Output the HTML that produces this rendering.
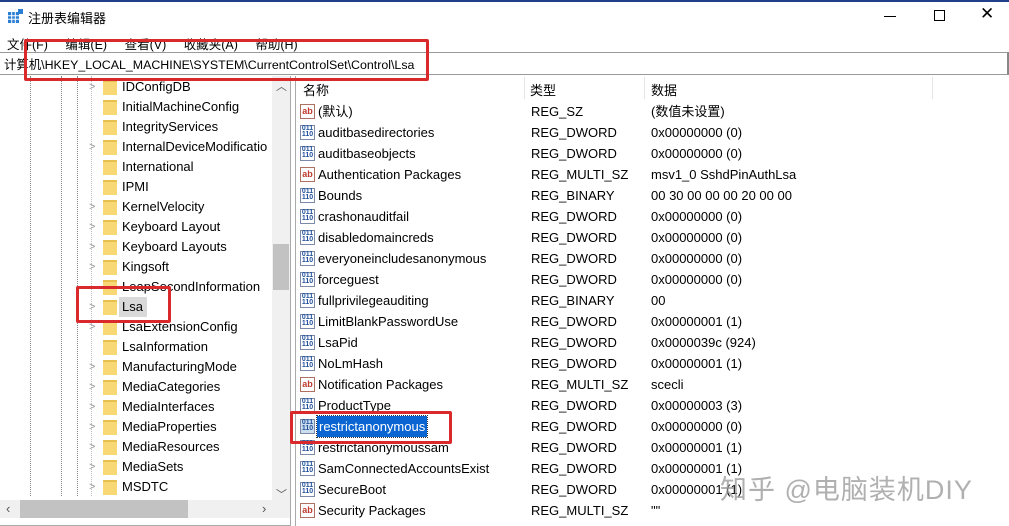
<!DOCTYPE html><html><head><meta charset="utf-8"><style>
*{margin:0;padding:0;box-sizing:border-box}
body{width:1009px;height:526px;overflow:hidden;background:#fff;font-family:"Liberation Sans","Noto Sans CJK SC",sans-serif;font-size:13px;color:#000;position:relative}
.a{position:absolute;white-space:nowrap}
.tr{position:absolute;left:0;height:20px;line-height:20px}
.fold{position:absolute;left:103px;top:3px;width:14px;height:15px;background:#f8d775;border-top:2px solid #e8c050}
.arr{position:absolute;left:89px;top:0;color:#999;font-size:11px}
.row{position:absolute;left:296px;height:21px;line-height:21px;width:713px}
.ic{position:absolute;left:4px;top:3px;width:15px;height:15px;border:1px solid #7a8aa8;font-size:7px;line-height:6px;text-align:center;color:#1f4f9c;font-weight:bold;background:#fff}
.ab{border-color:#b07060;color:#c0392b;font-size:9px;line-height:13px}
.red{position:absolute;border:3px solid #d9292b;border-radius:2px}
</style></head><body>
<div class="a" style="left:0;top:0;width:1009px;height:2px;background:#1f3f8a"></div>
<svg class="a" style="left:8px;top:9px" width="15" height="15"><rect x="0" y="3" width="11" height="11" fill="#2a7fd4"/><path d="M0 6.7h11M0 10.3h11M3.7 3v11M7.3 3v11" stroke="#fff" stroke-width="1"/><rect x="10" y="0" width="5" height="5" fill="#2a7fd4"/></svg>
<div class="a" style="left:28px;top:8px;font-size:13px">注册表编辑器</div>
<div class="a" style="left:884px;top:16px;width:12px;height:1px;background:#000"></div>
<div class="a" style="left:934px;top:10px;width:11px;height:11px;border:1px solid #000"></div>
<div class="a" style="left:980px;top:4px;font-size:17px;font-weight:100">✕</div>
<div class="a" style="left:7px;top:34px;font-size:12.5px;word-spacing:14px">文件(F) 编辑(E) 查看(V) 收藏夹(A) 帮助(H)</div>
<div class="a" style="left:0;top:52px;width:1009px;height:23px;border:1px solid #999;border-left:none;border-right:2px solid #888"></div>
<div class="a" style="left:4px;top:55px;font-size:12.4px">计算机\HKEY_LOCAL_MACHINE\SYSTEM\CurrentControlSet\Control\Lsa</div>
<!-- tree -->
<div class="a" style="left:0;top:76px;width:291px;height:450px;border-right:1px solid #aaa;border-bottom:1px solid #aaa;overflow:hidden">
<div class="a" style="left:30px;top:0;height:420px;border-left:1px dotted #888"></div>
<div class="a" style="left:61px;top:0;height:420px;border-left:1px dotted #888"></div>
<div class="a" style="left:77px;top:0;height:420px;border-left:1px dotted #888"></div>
<div class="a" style="left:91px;top:0;height:420px;border-left:1px dotted #bbb"></div>
<div class="a" style="left:272px;top:0;width:18px;height:424px;background:#f0f0f0"></div>
<div class="a" style="left:276px;top:2px;color:#555;font-size:11px">︿</div>
<div class="a" style="left:273px;top:168px;width:16px;height:46px;background:#c2c2c2"></div>
<div class="a" style="left:276px;top:410px;color:#555;font-size:11px">﹀</div>
<div class="a" style="left:0;top:424px;width:290px;height:18px;background:#f0f0f0"></div>
<div class="a" style="left:20px;top:424px;width:168px;height:18px;background:#c2c2c2"></div>
<div class="a" style="left:6px;top:425px;color:#555">‹</div><div class="a" style="left:262px;top:425px;color:#555">›</div>
</div>
<div id="tree"></div>
<!-- list header -->
<div class="a" style="left:295px;top:76px;width:714px;height:450px;border-left:1px solid #aaa"></div>
<div class="a" style="left:303px;top:80px">名称</div>
<div class="a" style="left:530px;top:80px">类型</div>
<div class="a" style="left:651px;top:80px">数据</div>
<div class="a" style="left:524px;top:77px;width:1px;height:22px;background:#e5e5e5"></div>
<div class="a" style="left:644px;top:77px;width:1px;height:22px;background:#e5e5e5"></div>
<div class="a" style="left:932px;top:77px;width:1px;height:22px;background:#e5e5e5"></div>
<div id="list"></div>
<div class="a" style="left:720px;top:468px;font-size:27px;color:rgba(150,150,150,0.75);letter-spacing:1px">知乎 @电脑装机DIY</div>
<div class="red" style="left:24px;top:39px;width:405px;height:42px"></div>
<div class="red" style="left:76px;top:286px;width:95px;height:37px"></div>
<div class="red" style="left:290px;top:411px;width:162px;height:33px"></div>
<script>
var t=["IDConfigDB","InitialMachineConfig","IntegrityServices","InternalDeviceModificatio","International","IPMI","KernelVelocity","Keyboard Layout","Keyboard Layouts","Kingsoft","LeapSecondInformation","Lsa","LsaExtensionConfig","LsaInformation","ManufacturingMode","MediaCategories","MediaInterfaces","MediaProperties","MediaResources","MediaSets","MSDTC","MUI"];
var noArr={1:1,2:1,4:1,5:1,10:1,13:1};var h="";
t.forEach(function(n,i){var y=77+i*20;if(y>495)return;
h+='<div class="tr" style="top:'+y+'px;width:272px;overflow:hidden;height:'+Math.min(20,500-y)+'px">'+(noArr[i]?'':'<span class="arr">&gt;</span>')+'<div class="fold"></div>'+(i==11?'<div class="a" style="left:119px;top:0px;width:28px;height:20px;background:#d9d9d9"></div>':'')+'<span class="a" style="left:122px;top:0">'+n+'</span></div>';});
document.getElementById('tree').innerHTML=h;
var L=[["ab","(默认)","REG_SZ","(数值未设置)"],["b","auditbasedirectories","REG_DWORD","0x00000000 (0)"],["b","auditbaseobjects","REG_DWORD","0x00000000 (0)"],["ab","Authentication Packages","REG_MULTI_SZ","msv1_0 SshdPinAuthLsa"],["b","Bounds","REG_BINARY","00 30 00 00 00 20 00 00"],["b","crashonauditfail","REG_DWORD","0x00000000 (0)"],["b","disabledomaincreds","REG_DWORD","0x00000000 (0)"],["b","everyoneincludesanonymous","REG_DWORD","0x00000000 (0)"],["b","forceguest","REG_DWORD","0x00000000 (0)"],["b","fullprivilegeauditing","REG_BINARY","00"],["b","LimitBlankPasswordUse","REG_DWORD","0x00000001 (1)"],["b","LsaPid","REG_DWORD","0x0000039c (924)"],["b","NoLmHash","REG_DWORD","0x00000001 (1)"],["ab","Notification Packages","REG_MULTI_SZ","scecli"],["b","ProductType","REG_DWORD","0x00000003 (3)"],["b","restrictanonymous","REG_DWORD","0x00000000 (0)"],["b","restrictanonymoussam","REG_DWORD","0x00000001 (1)"],["b","SamConnectedAccountsExist","REG_DWORD","0x00000001 (1)"],["b","SecureBoot","REG_DWORD","0x00000001 (1)"],["ab","Security Packages","REG_MULTI_SZ","\"\""]];
h="";L.forEach(function(r,i){var y=101+i*21;var sel=i==15;
h+='<div class="row" style="top:'+y+'px">'+(r[0]=="ab"?'<div class="ic ab">ab</div>':'<div class="ic"'+(sel?' style="background:#cde"':'')+'>011<br>110</div>')+'<span class="a" style="left:22px;top:0;'+(sel?'background:#0a64d2;color:#fff;padding:0 2px;left:21px;outline:1px dotted #333':'')+'">'+r[1]+'</span><span class="a" style="left:235px">'+r[2]+'</span><span class="a" style="left:355px">'+r[3]+'</span></div>';});
document.getElementById('list').innerHTML=h;
</script>
</body></html>
